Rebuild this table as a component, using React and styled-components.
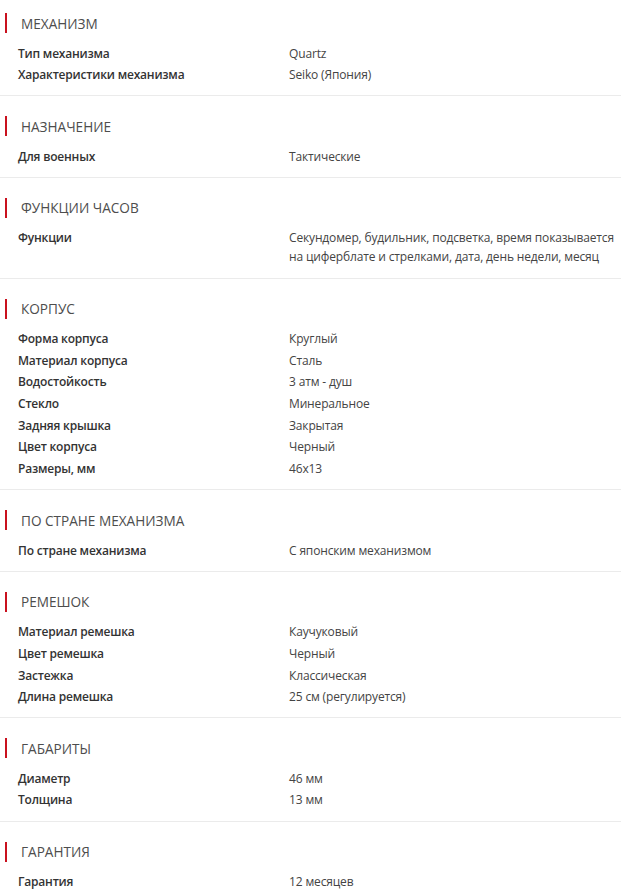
import React from "react";
import styled, { createGlobalStyle } from "styled-components";

const GlobalStyle = createGlobalStyle`
  body {
    margin: 0;
    background: #fff;
    font-family: "Open Sans", "Liberation Sans", sans-serif;
  }
`;

const Page = styled.div`
  width: 621px;
`;

const Section = styled.section`
  padding: 19.9px 0 9.9px;
  border-bottom: 1px solid #ebebeb;

  &:first-child {
    padding-top: 13px;
  }

  &:last-child {
    border-bottom: none;
  }
`;

const Title = styled.h3`
  margin: 0 0 9.2px 5px;
  height: 20px;
  display: flex;
  align-items: center;
  padding-left: 14px;
  border-left: 2px solid #c9111e;
  font-size: 13.6px;
  font-weight: 400;
  color: #4d4d4d;
  text-transform: uppercase;
`;

const Row = styled.div`
  display: grid;
  grid-template-columns: 271px 1fr;
  padding: 1.33px 0 1.33px 18px;
  font-size: 12px;
  line-height: 19px;
`;

const Label = styled.div`
  font-weight: 600;
  letter-spacing: -0.2px;
  color: #333;
`;

const Value = styled.div`
  color: #444;
  letter-spacing: -0.15px;
`;

const specs = [
  {
    title: "Механизм",
    rows: [
      ["Тип механизма", "Quartz"],
      ["Характеристики механизма", "Seiko (Япония)"],
    ],
  },
  {
    title: "Назначение",
    rows: [["Для военных", "Тактические"]],
  },
  {
    title: "Функции часов",
    rows: [
      [
        "Функции",
        "Секундомер, будильник, подсветка, время показывается на циферблате и стрелками, дата, день недели, месяц",
      ],
    ],
  },
  {
    title: "Корпус",
    rows: [
      ["Форма корпуса", "Круглый"],
      ["Материал корпуса", "Сталь"],
      ["Водостойкость", "3 атм - душ"],
      ["Стекло", "Минеральное"],
      ["Задняя крышка", "Закрытая"],
      ["Цвет корпуса", "Черный"],
      ["Размеры, мм", "46x13"],
    ],
  },
  {
    title: "По стране механизма",
    rows: [["По стране механизма", "С японским механизмом"]],
  },
  {
    title: "Ремешок",
    rows: [
      ["Материал ремешка", "Каучуковый"],
      ["Цвет ремешка", "Черный"],
      ["Застежка", "Классическая"],
      ["Длина ремешка", "25 см (регулируется)"],
    ],
  },
  {
    title: "Габариты",
    rows: [
      ["Диаметр", "46 мм"],
      ["Толщина", "13 мм"],
    ],
  },
  {
    title: "Гарантия",
    rows: [["Гарантия", "12 месяцев"]],
  },
];

export default function App() {
  return (
    <Page>
      <GlobalStyle />
      {specs.map((s) => (
        <Section key={s.title}>
          <Title>{s.title}</Title>
          {s.rows.map(([label, value]) => (
            <Row key={label}>
              <Label>{label}</Label>
              <Value>{value}</Value>
            </Row>
          ))}
        </Section>
      ))}
    </Page>
  );
}
